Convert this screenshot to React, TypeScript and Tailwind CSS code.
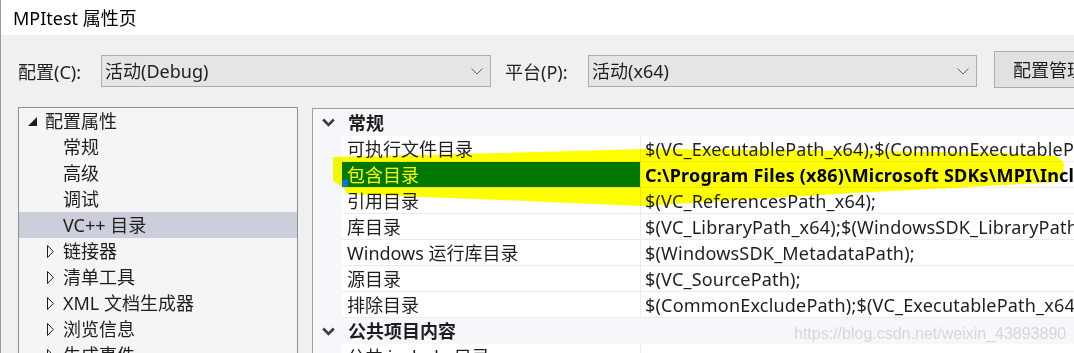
import React from "react";

const treeItems = [
  { label: "配置属性", level: 0, arrow: "open" },
  { label: "常规", level: 1, arrow: "none" },
  { label: "高级", level: 1, arrow: "none" },
  { label: "调试", level: 1, arrow: "none" },
  { label: "VC++ 目录", level: 1, arrow: "none", selected: true },
  { label: "链接器", level: 1, arrow: "closed" },
  { label: "清单工具", level: 1, arrow: "closed" },
  { label: "XML 文档生成器", level: 1, arrow: "closed" },
  { label: "浏览信息", level: 1, arrow: "closed" },
  { label: "生成事件", level: 1, arrow: "closed" },
];

type Row =
  | { kind: "cat"; label: string }
  | { kind: "prop"; name: string; value: string; selected?: boolean };

const gridRows: Row[] = [
  { kind: "cat", label: "常规" },
  { kind: "prop", name: "可执行文件目录", value: "$(VC_ExecutablePath_x64);$(CommonExecutablePath)" },
  {
    kind: "prop",
    name: "包含目录",
    value: "C:\\Program Files (x86)\\Microsoft SDKs\\MPI\\Include;$(VC_IncludePath);$(WindowsSDK_IncludePath);",
    selected: true,
  },
  { kind: "prop", name: "引用目录", value: "$(VC_ReferencesPath_x64);" },
  { kind: "prop", name: "库目录", value: "$(VC_LibraryPath_x64);$(WindowsSDK_LibraryPath_x64);$(NETFXKitsDir)Lib\\um\\x64" },
  { kind: "prop", name: "Windows 运行库目录", value: "$(WindowsSDK_MetadataPath);" },
  { kind: "prop", name: "源目录", value: "$(VC_SourcePath);" },
  { kind: "prop", name: "排除目录", value: "$(CommonExcludePath);$(VC_ExecutablePath_x64);$(VC_LibraryPath_x64)" },
  { kind: "cat", label: "公共项目内容" },
  { kind: "prop", name: "公共 include 目录", value: "" },
];

const SelectChevron = () => (
  <svg width="12" height="7" viewBox="0 0 12 7" className="shrink-0">
    <polyline points="0.5,0.5 6,6 11.5,0.5" fill="none" stroke="#606060" strokeWidth="1" />
  </svg>
);

const Dropdown = ({ text, width }: { text: string; width: string }) => (
  <div className={`${width} shrink-0 mt-[4px] h-[32px] flex items-center justify-between pl-[3px] pr-[7px] bg-[#e5e5e5] border border-[#adadad]`}>
    <span>{text}</span>
    <SelectChevron />
  </div>
);

const TreeArrow = ({ kind }: { kind: string }) => {
  if (kind === "open")
    return (
      <svg width="9" height="9" viewBox="0 0 9 9" className="shrink-0">
        <polygon points="9,0 9,9 0,9" fill="#1e1e1e" />
      </svg>
    );
  if (kind === "closed")
    return (
      <svg width="7" height="13" viewBox="0 0 7 13" className="shrink-0">
        <polygon points="0.5,0.5 6.3,6.5 0.5,12.5" fill="none" stroke="#1e1e1e" strokeWidth="1" />
      </svg>
    );
  return null;
};

const CatChevron = () => (
  <svg width="13" height="9" viewBox="0 0 13 9" className="shrink-0">
    <polyline points="1.2,1.5 6.5,7 11.8,1.5" fill="none" stroke="#3c3c3c" strokeWidth="2.6" />
  </svg>
);

export default function App() {
  return (
    <div className="relative w-[1074px] h-[353px] overflow-hidden bg-[#f0f0f0] border-l border-[#9a9a9a] text-[18px] leading-none text-[#1e1e1e] font-['Noto_Sans','Noto_Sans_CJK_SC',sans-serif]">
      <div className="h-[35px] bg-white pl-[12px] flex items-center text-black">MPItest 属性页</div>

      <div className="flex items-start h-[37px] mt-[16px] pl-[17px] whitespace-nowrap">
        <span className="w-[83px] shrink-0 mt-[12px]">配置(C):</span>
        <Dropdown text="活动(Debug)" width="w-[390px]" />
        <span className="ml-[14px] w-[83px] shrink-0 mt-[12px]">平台(P):</span>
        <Dropdown text="活动(x64)" width="w-[389px]" />
        <div className="ml-[17px] shrink-0 h-[37px] flex items-center pl-[18px] pr-[10px] bg-[#e1e1e1] border border-[#adadad]">
          配置管理器(O)...
        </div>
      </div>

      <div className="flex mt-[19px] pl-[17px]">
        <div className="w-[280px] h-[260px] shrink-0 bg-[#f5f5f5] border border-[#8f8f8f]">
          {treeItems.map((item) => (
            <div
              key={item.label}
              className={`h-[26px] flex items-center whitespace-nowrap ${item.selected ? "bg-[#cccedb]" : ""}`}
            >
              {item.level === 0 ? (
                <div className="flex items-center pl-[9px] gap-[8px]">
                  <TreeArrow kind={item.arrow} />
                  <span>{item.label}</span>
                </div>
              ) : (
                <div className="flex items-center">
                  <div className="w-[44px] flex justify-end pr-[9px]">
                    <TreeArrow kind={item.arrow} />
                  </div>
                  <span>{item.label}</span>
                </div>
              )}
            </div>
          ))}
        </div>

        <div className="ml-[14px] mt-[1px] flex-1 min-w-0 h-[260px] bg-[#f5f7fa] border-l border-t border-[#a0a0a0] whitespace-nowrap">
          {gridRows.map((row, i) =>
            row.kind === "cat" ? (
              <div key={i} className={`${i === 0 ? "h-[27px]" : "h-[26px]"} flex items-center pl-[9px] gap-[13px] font-bold`}>
                <CatChevron />
                <span>{row.label}</span>
              </div>
            ) : (
              <div key={i} className="h-[26px] flex">
                <div className="w-[29px] shrink-0" />
                <div
                  className={`relative w-[299px] shrink-0 flex items-center pl-[5px] border-r border-b border-[#ececec] ${
                    row.selected ? "bg-[#007800] text-[#ffff00]" : "bg-white"
                  }`}
                >
                  {row.name}
                  {row.selected && (
                    <div className="absolute left-0 bottom-0 w-[6px] h-[7px] bg-[#0078d7] z-20" />
                  )}
                </div>
                <div
                  className={`flex-1 min-w-0 overflow-hidden flex items-center pl-[4px] tracking-[0.2px] bg-white border-b border-[#ececec] ${
                    row.selected ? "font-bold text-black" : ""
                  }`}
                >
                  {row.value}
                </div>
              </div>
            )
          )}
        </div>
      </div>

      <svg
        className="absolute left-0 top-0 z-10 pointer-events-none mix-blend-multiply"
        width="1074"
        height="353"
        viewBox="0 0 1074 353"
      >
        <polygon
          fill="#ffff00"
          points="332,157 500,153 645,149 800,150 1000,153 1055,156 1063,163 1062,175 1055,182 950,188 850,193 740,200 640,206 500,200 346,194 342,187 332,181"
        />
      </svg>

      <div className="absolute left-[793px] top-[326px] z-30 text-[16px] leading-none text-[#c4c4c4]/70 font-['Liberation_Sans',Arial,sans-serif] [text-shadow:0_0_1px_#ffffff]">
        https://blog.csdn.net/weixin_43893890
      </div>
    </div>
  );
}
